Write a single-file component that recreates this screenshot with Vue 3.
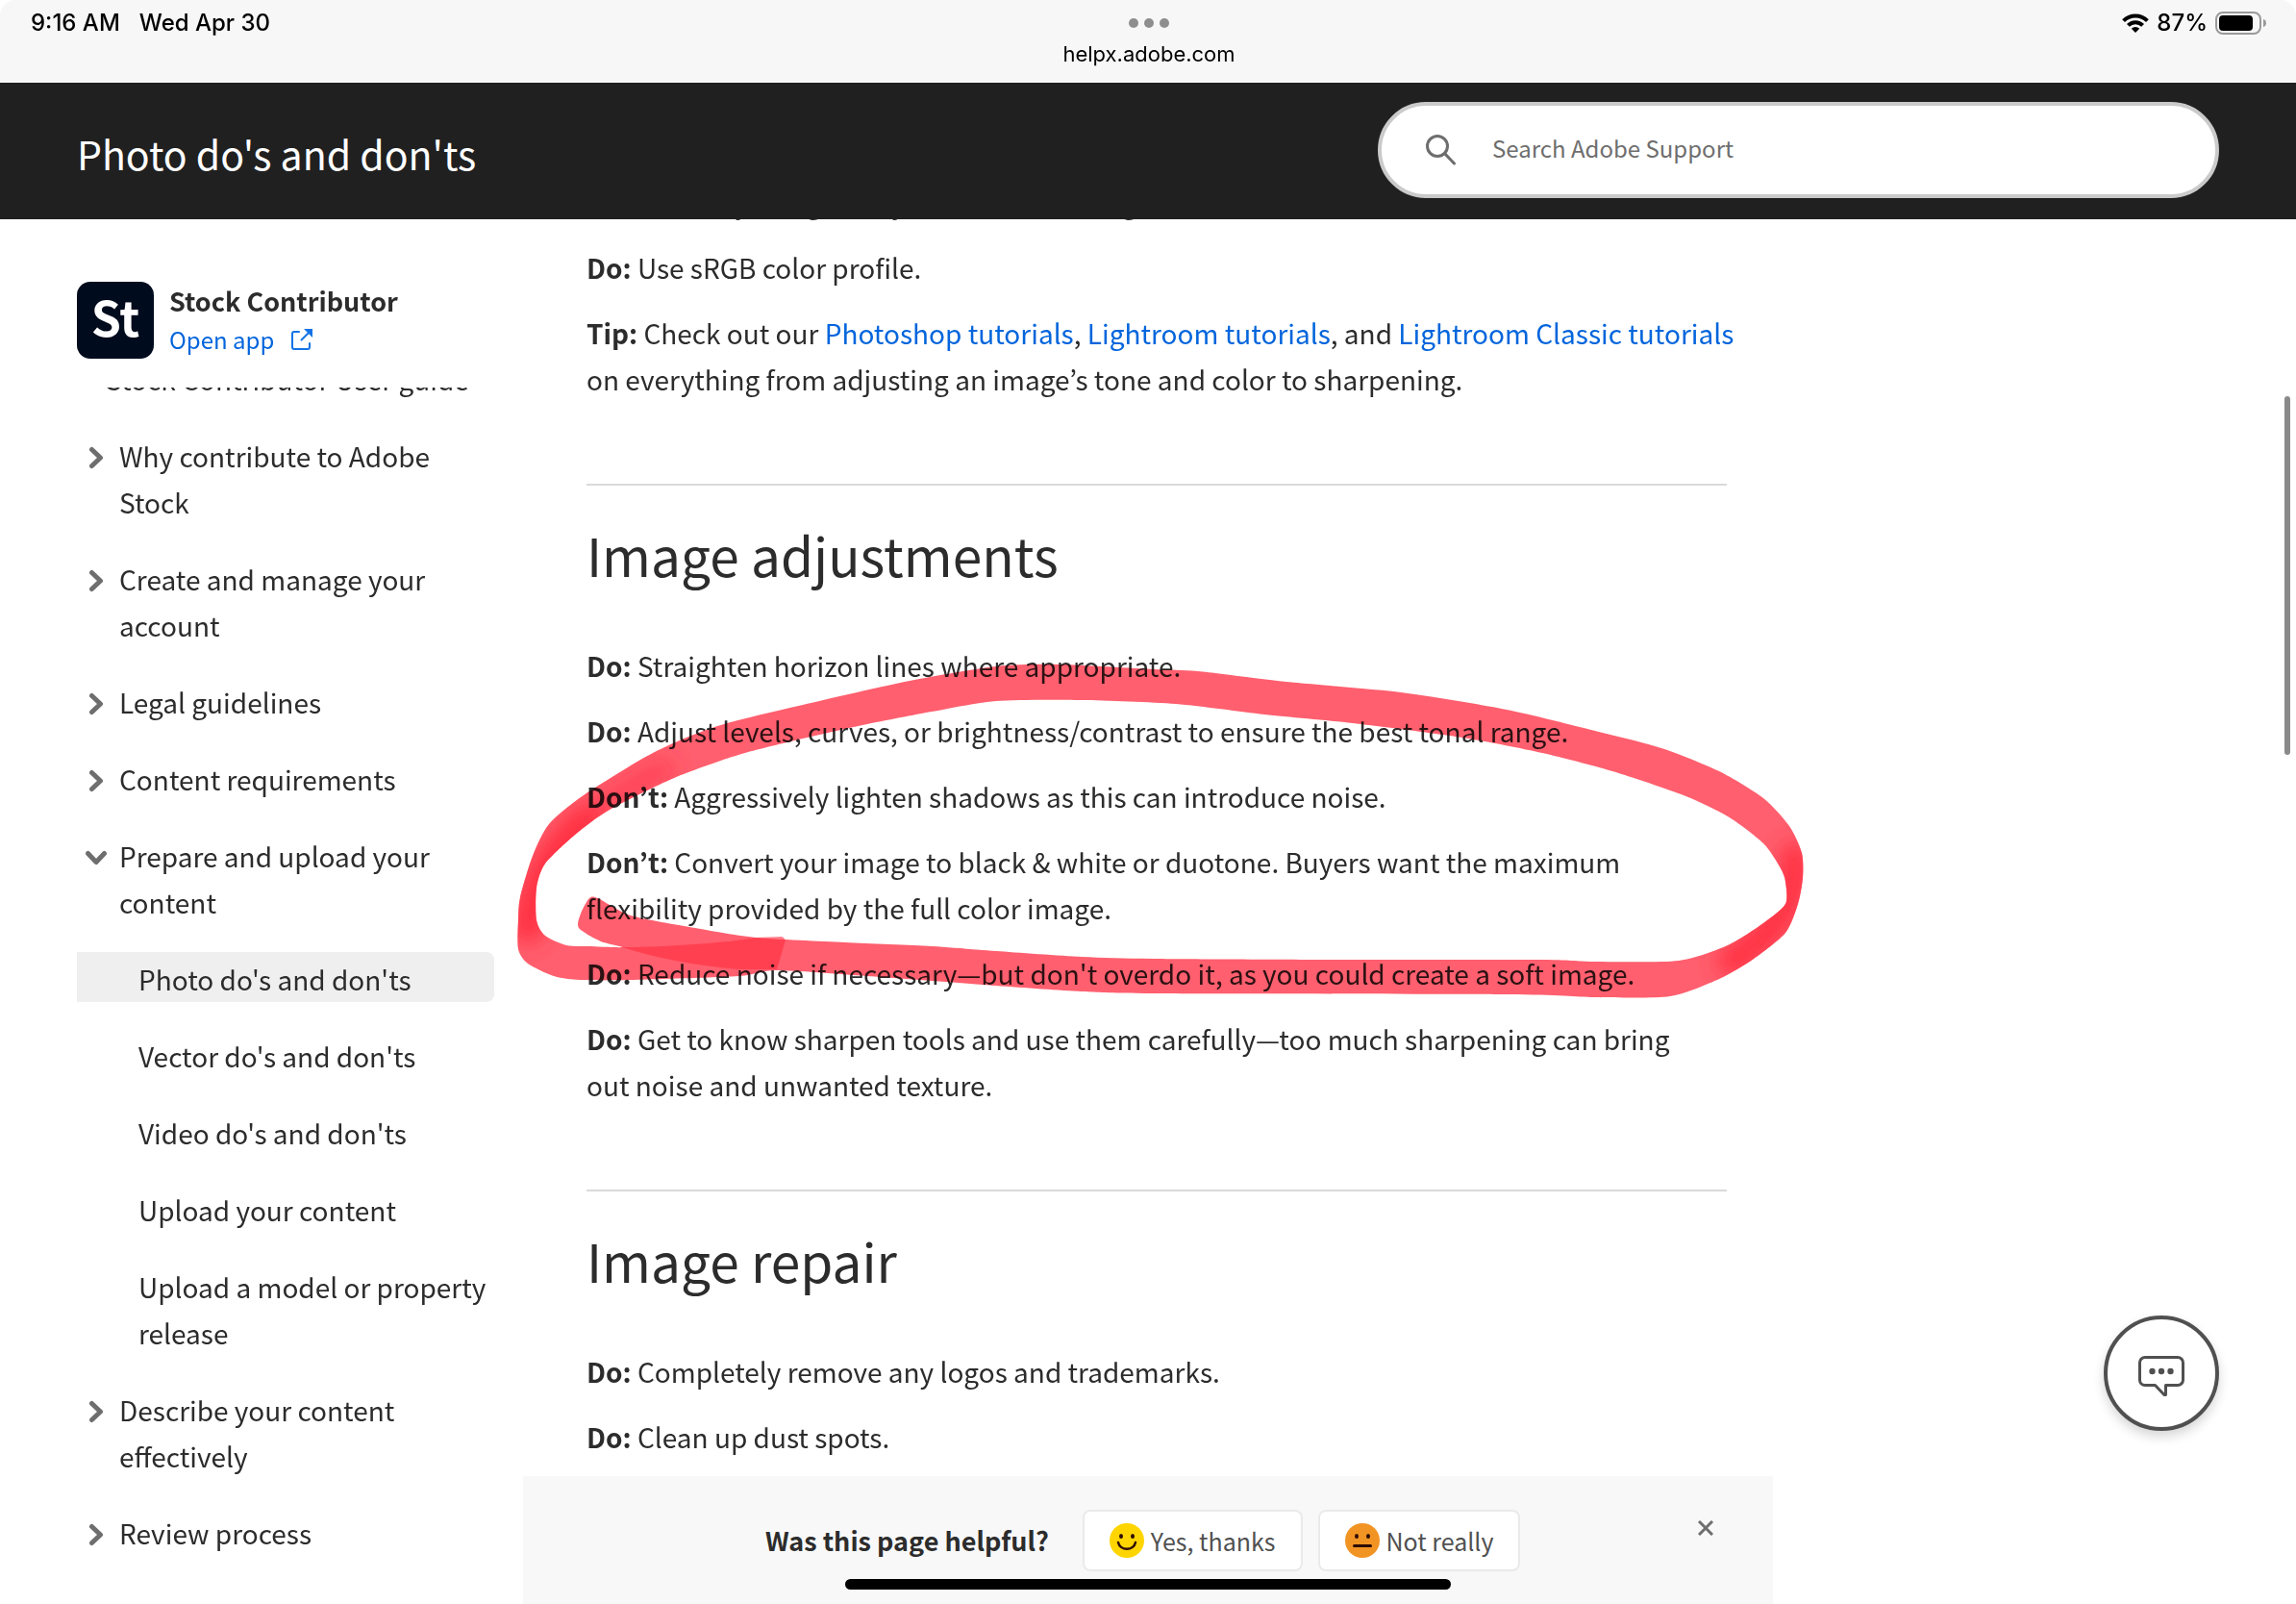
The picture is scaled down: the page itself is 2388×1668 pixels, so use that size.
<template>
  <div class="page">
    <div class="status-bar">
      <div class="status-left">
        <span>9:16 AM</span>
        <span>Wed Apr 30</span>
      </div>
      <div class="status-center">
        <div class="dots"><i></i><i></i><i></i></div>
        <span class="url">helpx.adobe.com</span>
      </div>
      <div class="status-right">
        <svg class="wifi" viewBox="0 0 28 20" aria-hidden="true">
          <g fill="none" stroke="#000" stroke-width="4">
            <path d="M1.6 7.6A17.4 17.4 0 0 1 26.4 7.6" />
            <path d="M6.4 12.4A10.6 10.6 0 0 1 21.6 12.4" />
          </g>
          <path d="M14 20L9.8 15.7A6 6 0 0 1 18.2 15.7Z" />
        </svg>
        <span>87%</span>
        <svg class="battery" viewBox="0 0 54 24" aria-hidden="true">
          <rect x="1" y="1" width="46" height="22" rx="7" fill="none" stroke="#9a9a9a" stroke-width="2" />
          <rect x="4" y="4" width="35" height="16" rx="4" />
          <path d="M50 8c4 1 4 7 0 8z" fill="#9a9a9a" />
        </svg>
      </div>
    </div>

    <header class="header">
      <h1>Photo do's and don'ts</h1>
      <label class="search">
        <svg viewBox="0 0 32 32" aria-hidden="true">
          <g fill="none" stroke="#6e6e6e" stroke-width="3" stroke-linecap="round">
            <circle cx="12" cy="12" r="10.5" />
            <path d="M19.6 19.6L29.5 30" />
          </g>
        </svg>
        <input type="search" placeholder="Search Adobe Support" aria-label="Search Adobe Support" />
      </label>
    </header>

    <div class="body">
      <aside class="sidebar">
        <div class="product">
          <div class="product-logo">St</div>
          <div>
            <div class="product-name">Stock Contributor</div>
            <a class="open-app" href="#">
              Open app
              <svg viewBox="0 0 22 22" aria-hidden="true">
                <g fill="none" stroke="#1473e6" stroke-width="2" stroke-linecap="round">
                  <path d="M8 3H3a2 2 0 0 0-2 2v14a2 2 0 0 0 2 2h14a2 2 0 0 0 2-2v-4" />
                  <path d="M10.5 11.5L20 2" />
                </g>
                <path d="M13 0h9v9z" fill="#1473e6" />
              </svg>
            </a>
          </div>
        </div>

        <nav class="toc">
          <ul>
            <li><a class="guide" href="#">Stock Contributor User guide</a></li>
            <li v-for="item in toc" :key="item.title">
              <button class="group" :aria-expanded="!!item.children" type="button">
                <svg class="chevron" :class="{ open: item.children }" viewBox="0 0 24 24" aria-hidden="true">
                  <path d="M7.5 3.5L16.5 12L7.5 20.5" fill="none" stroke="#6e6e6e" stroke-width="5" stroke-linecap="round" stroke-linejoin="round" />
                </svg>
                <span>{{ item.title }}</span>
              </button>
              <ul v-if="item.children" class="children">
                <li v-for="child in item.children" :key="child">
                  <a href="#" :class="{ active: child === current }">{{ child }}</a>
                </li>
              </ul>
            </li>
          </ul>
        </nav>
      </aside>

      <main class="article">
        <section>
          <p><b>Do:</b> Carefully bring clarity to the whole image.</p>
          <p><b>Do:</b> Use sRGB color profile.</p>
          <p>
            <b>Tip:</b> Check out our <a href="#">Photoshop tutorials</a>, <a href="#">Lightroom tutorials</a>, and
            <a href="#">Lightroom Classic tutorials</a><br />
            on everything from adjusting an image’s tone and color to sharpening.
          </p>
        </section>
        <section v-for="section in sections" :key="section.title" class="titled">
          <h2>{{ section.title }}</h2>
          <p v-for="tip in section.tips" :key="tip.text" class="tip"><b>{{ tip.label }}</b> {{ tip.text }}</p>
        </section>

        <!-- hand-drawn marker ring over the tips -->
        <svg class="marker" viewBox="530 680 1360 370" aria-hidden="true">
          <defs>
            <clipPath id="ring-clip"><path :d="ring" clip-rule="evenodd" /></clipPath>
            <filter id="soft" filterUnits="userSpaceOnUse" x="500" y="660" width="1420" height="410">
              <feGaussianBlur stdDeviation="11" />
            </filter>
          </defs>
          <path :d="ring" fill="#ff2d40" fill-opacity="0.76" fill-rule="evenodd" />
          <path :d="overlap" fill="#ff2d40" fill-opacity="0.6" />
          <g clip-path="url(#ring-clip)">
            <g filter="url(#soft)" fill="none" stroke="#ff2d40" stroke-linecap="round">
              <path d="M690 800C660 815 630 835 612 850" stroke-width="26" stroke-opacity="0.5" />
              <path d="M610 852C580 880 557 910 549 965" stroke-width="32" />
              <path d="M1866 890C1870 930 1850 970 1800 1000" stroke-width="28" />
            </g>
          </g>
        </svg>
      </main>
    </div>

    <form class="feedback" @submit.prevent>
      <span class="question">Was this page helpful?</span>
      <button class="answer" type="button">
        <svg viewBox="0 0 36 36" aria-hidden="true">
          <circle cx="18" cy="18" r="18" fill="#ffd500" />
          <ellipse cx="12" cy="13.5" rx="2" ry="2.5" fill="#2d0b05" />
          <ellipse cx="24" cy="13.5" rx="2" ry="2.5" fill="#2d0b05" />
          <path d="M9 20c2 9 16 9 18 0" fill="none" stroke="#2d0b05" stroke-width="2.5" stroke-linecap="round" />
        </svg>
        Yes, thanks
      </button>
      <button class="answer" type="button">
        <svg viewBox="0 0 36 36" aria-hidden="true">
          <circle cx="18" cy="18" r="18" fill="#f29423" />
          <ellipse cx="12" cy="13.5" rx="2" ry="2.5" fill="#2d0b05" />
          <ellipse cx="24" cy="13.5" rx="2" ry="2.5" fill="#2d0b05" />
          <path d="M9.5 23.5h17" fill="none" stroke="#2d0b05" stroke-width="3" stroke-linecap="round" />
        </svg>
        Not really
      </button>
      <button class="close" type="button" aria-label="Close">
        <svg viewBox="0 0 16 16" aria-hidden="true">
          <path d="M1 1l14 14M15 1L1 15" stroke="#6e6e6e" stroke-width="3" />
        </svg>
      </button>
    </form>

    <button class="chat" type="button" aria-label="Chat">
      <svg viewBox="0 0 48 42" aria-hidden="true">
        <path d="M7 1.5h34a5.5 5.5 0 0 1 5.5 5.5v18a5.5 5.5 0 0 1-5.5 5.5H28.5V40c0 1-1 1-1.5 0.5L17.500 30.5H7A5.5 5.5 0 0 1 1.5 25V7A5.5 5.5 0 0 1 7 1.5Z" fill="none" stroke="#505050" stroke-width="3" stroke-linejoin="round" />
        <circle cx="14.5" cy="16" r="3.2" fill="#505050" />
        <circle cx="24" cy="16" r="3.2" fill="#505050" />
        <circle cx="33.5" cy="16" r="3.2" fill="#505050" />
      </svg>
    </button>

    <div class="scroll-thumb"></div>
    <div class="home-indicator"></div>
  </div>
</template>

<script setup>
const current = "Photo do's and don'ts"

const toc = [
  { title: 'Why contribute to Adobe Stock' },
  { title: 'Create and manage your account' },
  { title: 'Legal guidelines' },
  { title: 'Content requirements' },
  {
    title: 'Prepare and upload your content',
    children: [
      "Photo do's and don'ts",
      "Vector do's and don'ts",
      "Video do's and don'ts",
      'Upload your content',
      'Upload a model or property release'
    ]
  },
  { title: 'Describe your content effectively' },
  { title: 'Review process' }
]

const sections = [
  {
    title: 'Image adjustments',
    tips: [
      { label: 'Do:', text: 'Straighten horizon lines where appropriate.' },
      { label: 'Do:', text: 'Adjust levels, curves, or brightness/contrast to ensure the best tonal range.' },
      { label: 'Don’t:', text: 'Aggressively lighten shadows as this can introduce noise.' },
      {
        label: 'Don’t:',
        text: 'Convert your image to black & white or duotone. Buyers want the maximum\nflexibility provided by the full color image.'
      },
      { label: 'Do:', text: "Reduce noise if necessary—but don't overdo it, as you could create a soft image." },
      {
        label: 'Do:',
        text: 'Get to know sharpen tools and use them carefully—too much sharpening can bring\nout noise and unwanted texture.'
      }
    ]
  },
  {
    title: 'Image repair',
    tips: [
      { label: 'Do:', text: 'Completely remove any logos and trademarks.' },
      { label: 'Do:', text: 'Clean up dust spots.' }
    ]
  }
]

// outer edge of the marker ring, clockwise from the lower left
const outer = [
  [603, 1019], [576, 1015], [549, 1002], [539, 987], [539, 957], [541, 933], [554, 890], [571, 857], [607, 827],
  [679, 783], [746, 755], [835, 733], [946, 708], [1036, 693], [1103, 691], [1200, 696], [1246, 698], [1338, 709],
  [1457, 720], [1567, 738], [1659, 760], [1728, 778], [1788, 802], [1834, 830], [1861, 859], [1874, 887], [1875, 913],
  [1870, 940], [1857, 970], [1824, 997], [1788, 1018], [1737, 1036], [1659, 1037], [1567, 1034], [1200, 1033],
  [1125, 1031], [1036, 1025], [902, 1015], [808, 1009], [768, 1015], [656, 1019]
]

// inner edge, including the blunt start of the stroke
const inner = [
  [647, 985], [625, 979], [602, 965], [604, 950], [613, 934], [622, 934], [656, 952], [723, 965], [786, 975],
  [879, 980], [969, 984], [1036, 989], [1125, 995], [1200, 997], [1384, 998], [1604, 998], [1659, 1000], [1746, 999],
  [1797, 983], [1834, 960], [1857, 940], [1857, 917], [1852, 903], [1834, 877], [1797, 849], [1751, 827], [1677, 802],
  [1604, 783], [1521, 767], [1407, 752], [1315, 743], [1223, 732], [1125, 728], [1036, 729], [969, 740], [902, 753],
  [835, 768], [768, 785], [701, 809], [634, 842], [598, 868], [567, 898], [558, 923], [558, 957], [567, 973],
  [589, 983], [612, 984]
]

/** closed Catmull-Rom curve through the points */
function closedCurve(points) {
  const n = points.length
  let d = `M${points[0]}`
  for (let i = 0; i < n; i++) {
    const [p0, p1, p2, p3] = [-1, 0, 1, 2].map(k => points[(i + k + n) % n])
    const c1 = [p1[0] + (p2[0] - p0[0]) / 8, p1[1] + (p2[1] - p0[1]) / 8]
    const c2 = [p2[0] - (p3[0] - p1[0]) / 8, p2[1] - (p3[1] - p1[1]) / 8]
    d += `C${c1} ${c2} ${p2}`
  }
  return d + 'Z'
}

const ring = closedCurve(outer) + closedCurve(inner)
const overlap = 'M647 985C690 985 760 980 786 975L813 974Q818 976 816 981L808 1008L768 1008Q700 1002 647 985Z'
</script>

<style>
body {
  margin: 0;
  background: #fff;
}
</style>

<style scoped>
.page {
  position: relative;
  min-height: 100vh;
  overflow: hidden;
  font-family: "Noto Sans CJK KR", "Noto Sans", sans-serif;
  font-size: 28px;
  line-height: 48px;
  color: #2c2c2c;
}

button,
input {
  font: inherit;
  color: inherit;
}

a {
  color: #0265dc;
  text-decoration: none;
}

ul {
  list-style: none;
  margin: 0;
  padding: 0;
}

.status-bar {
  display: grid;
  grid-template-columns: 1fr auto 1fr;
  height: 86px;
  box-sizing: border-box;
  padding: 8px 30px 0 32px;
  background: #f7f7f7;
  border-radius: 16px 16px 0 0;
  font-family: Inter, "Liberation Sans", sans-serif;
  font-size: 24px;
  font-weight: 500;
  line-height: 32px;
  color: #000;
}

.status-left {
  display: flex;
  gap: 20px;
}

.status-center {
  display: flex;
  flex-direction: column;
  align-items: center;
}

.dots {
  display: flex;
  align-items: center;
  gap: 6px;
  height: 32px;
}

.dots i {
  width: 10px;
  height: 10px;
  border-radius: 50%;
  background: #8e8e8e;
}

.url {
  font-size: 22px;
  font-weight: 400;
}

.status-right {
  display: flex;
  justify-content: flex-end;
  align-items: center;
  height: 32px;
  gap: 8px;
}

.wifi {
  width: 28px;
  height: 20px;
}

.battery {
  width: 54px;
  height: 24px;
}

.header {
  position: relative;
  z-index: 2;
  display: flex;
  justify-content: space-between;
  align-items: center;
  height: 142px;
  box-sizing: border-box;
  padding: 0 80px 2px;
  background: #202020;
  color: #fff;
}

.header h1 {
  margin: 6px 0 0;
  font-size: 41px;
  font-weight: 400;
}

.search {
  display: flex;
  align-items: center;
  gap: 37px;
  width: 875px;
  height: 100px;
  box-sizing: border-box;
  padding: 0 46px;
  border: 4px solid #cacaca;
  border-radius: 50px;
  background: #fff;
}

.search svg {
  width: 32px;
  height: 32px;
  flex-shrink: 0;
}

.search input {
  flex: 1;
  min-width: 0;
  padding: 0 0 4px;
  border: none;
  outline: none;
  background: none;
  font-size: 24px;
  color: #2c2c2c;
}

.search input::placeholder {
  color: #6e6e6e;
  opacity: 1;
}

.body {
  display: grid;
  grid-template-columns: 434px minmax(0, 1186px);
  column-gap: 96px;
  padding: 0 80px;
}

.product {
  display: flex;
  gap: 16px;
  padding: 65px 0 30px;
  line-height: 40px;
}

.product-logo {
  width: 80px;
  height: 80px;
  border-radius: 14px;
  background: #000b1d;
  color: #fff;
  font-size: 50px;
  font-weight: 700;
  line-height: 70px;
  text-align: center;
}

.product-name {
  font-size: 27px;
  font-weight: 700;
}

.open-app {
  display: flex;
  align-items: center;
  gap: 18px;
  font-size: 24px;
}

.open-app svg {
  width: 22px;
  height: 22px;
}

.toc {
  overflow: hidden;
}

.toc > ul {
  margin-top: -33px;
}

.toc li {
  margin-bottom: 32px;
}

.toc a {
  display: block;
  color: inherit;
}

.toc .guide {
  padding-left: 30px;
}

.group {
  display: flex;
  align-items: flex-start;
  gap: 12px;
  width: 100%;
  padding: 0 0 0 8px;
  border: none;
  background: none;
  text-align: left;
  cursor: pointer;
}

.chevron {
  width: 24px;
  height: 24px;
  margin-top: 14px;
  flex-shrink: 0;
}

.chevron.open {
  transform: rotate(90deg);
}

.children {
  margin-top: 32px;
}

.children a {
  padding-left: 64px;
}

.children .active {
  margin-top: -4px;
  padding-top: 4px;
  border-radius: 0 8px 8px 0;
  background: #efefef;
}

.article {
  position: relative;
  margin-top: -42px;
}

/* long lines may run slightly past the section rule */
.article p {
  margin: 0 -32px 20px 0;
}

.article p:last-child {
  margin-bottom: 0;
}

.tip {
  white-space: pre-line;
}

.titled {
  margin-top: 85px;
  border-top: 2px solid #dadada;
}

.article h2 {
  margin: 36px 0 57px;
  font-size: 55px;
  font-weight: 400;
  line-height: 70px;
}

.marker {
  position: absolute;
  top: 494px;
  left: -80px;
  width: 1360px;
  height: 370px;
  mix-blend-mode: multiply;
  pointer-events: none;
}

.feedback {
  position: fixed;
  bottom: 0;
  left: 50%;
  z-index: 3;
  display: flex;
  align-items: flex-start;
  width: 1300px;
  height: 133px;
  box-sizing: border-box;
  padding: 35px 62px 0 252px;
  transform: translateX(-50%);
  background: #f8f8f8;
}

.question {
  margin-right: 35px;
  font-size: 27px;
  font-weight: 700;
  line-height: 64px;
}

.answer {
  display: flex;
  align-items: center;
  gap: 7px;
  height: 64px;
  margin-right: 16px;
  padding: 0 26px;
  border: 2px solid #eaeaea;
  border-radius: 8px;
  background: #fff;
  color: #505050;
  font-size: 25px;
}

.answer svg {
  width: 36px;
  height: 36px;
}

.close {
  display: flex;
  align-items: center;
  height: 38px;
  margin-left: auto;
  padding: 0;
  border: none;
  background: none;
}

.close svg {
  width: 16px;
  height: 16px;
}

.chat {
  position: fixed;
  right: 80px;
  bottom: 180px;
  display: flex;
  align-items: center;
  justify-content: center;
  width: 120px;
  height: 120px;
  padding: 6px 0 0;
  border: 4px solid #505050;
  border-radius: 50%;
  background: #fff;
  box-shadow: 0 6px 12px rgba(0, 0, 0, 0.16);
}

.chat svg {
  width: 48px;
  height: 42px;
}

.scroll-thumb {
  position: fixed;
  top: 412px;
  right: 6px;
  width: 6px;
  height: 373px;
  border-radius: 3px;
  background: #8a8a8a;
}

.home-indicator {
  position: fixed;
  bottom: 15px;
  left: 50%;
  z-index: 4;
  width: 630px;
  height: 11px;
  border-radius: 6px;
  transform: translateX(-50%);
  background: #000;
}
</style>
